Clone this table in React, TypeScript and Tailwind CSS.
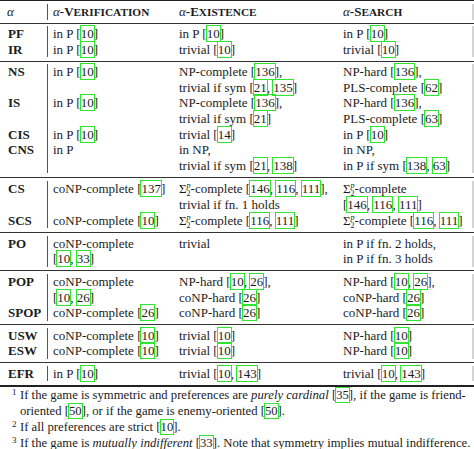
import { Fragment, type ReactNode } from "react";

const Cite = ({ n }: { n: number[] }) => (
  <>
    [
    {n.map((x, i) => (
      <Fragment key={i}>
        {i > 0 && ", "}
        <span className="outline outline-1 outline-[#2ee62e]">{x}</span>
      </Fragment>
    ))}
    ]
  </>
);

const Sigma = () => (
  <>
    Σ<span className="relative top-[3px] text-[8px]">2</span>
    <span className="relative -top-[5px] -ml-[4px] text-[8px] italic">p</span>
  </>
);

// header: α in math italic, then bold small caps
const Head = ({ first, rest }: { first: string; rest: string }) => (
  <span>
    <span className="italic font-normal">α</span>
    <span className="font-bold">
      -{first}
      <span className="text-[11.3px] uppercase">{rest}</span>
    </span>
  </span>
);

const Lines = ({ lines, bold }: { lines: ReactNode[]; bold?: boolean }) => (
  <div className={bold ? "font-bold pl-[8px]" : ""}>
    {lines.map((l, i) => (
      <div key={i} className="h-[15.6px] leading-[15.6px] whitespace-nowrap">
        {l}
      </div>
    ))}
  </div>
);

type Group = {
  labels: string[];
  ver: ReactNode[];
  ex: ReactNode[];
  se: ReactNode[];
  extra?: boolean;
};

const groups: Group[] = [
  {
    labels: ["PF", "IR"],
    ver: [<>in P <Cite n={[10]} /></>, <>in P <Cite n={[10]} /></>],
    ex: [<>in P <Cite n={[10]} /></>, <>trivial <Cite n={[10]} /></>],
    se: [<>in P <Cite n={[10]} /></>, <>trivial <Cite n={[10]} /></>],
  },
  {
    labels: ["NS", "", "IS", "", "CIS", "CNS", ""],
    ver: [
      <>in P <Cite n={[10]} /></>,
      "",
      <>in P <Cite n={[10]} /></>,
      "",
      <>in P <Cite n={[10]} /></>,
      "in P",
      "",
    ],
    ex: [
      <>NP-complete <Cite n={[136]} />,</>,
      <>trivial if sym <Cite n={[21, 135]} /></>,
      <>NP-complete <Cite n={[136]} />,</>,
      <>trivial if sym <Cite n={[21]} /></>,
      <>trivial <Cite n={[14]} /></>,
      "in NP,",
      <>trivial if sym <Cite n={[21, 138]} /></>,
    ],
    se: [
      <>NP-hard <Cite n={[136]} />,</>,
      <>PLS-complete <Cite n={[62]} /></>,
      <>NP-hard <Cite n={[136]} />,</>,
      <>PLS-complete <Cite n={[63]} /></>,
      <>in P <Cite n={[10]} /></>,
      "in NP,",
      <>in P if sym <Cite n={[138, 63]} /></>,
    ],
  },
  {
    labels: ["CS", "", "SCS"],
    extra: true,
    ver: [<>coNP-complete <Cite n={[137]} /></>, "", <>coNP-complete <Cite n={[10]} /></>],
    ex: [
      <><Sigma />-complete <Cite n={[146, 116, 111]} />,</>,
      "trivial if fn. 1 holds",
      <><Sigma />-complete <Cite n={[116, 111]} /></>,
    ],
    se: [
      <><Sigma />-complete</>,
      <Cite n={[146, 116, 111]} />,
      <><Sigma />-complete <Cite n={[116, 111]} /></>,
    ],
  },
  {
    labels: ["PO", ""],
    ver: ["coNP-complete", <Cite n={[10, 33]} />],
    ex: ["trivial", ""],
    se: ["in P if fn. 2 holds,", "in P if fn. 3 holds"],
  },
  {
    labels: ["POP", "", "SPOP"],
    ver: ["coNP-complete", <Cite n={[10, 26]} />, <>coNP-complete <Cite n={[26]} /></>],
    ex: [
      <>NP-hard <Cite n={[10, 26]} />,</>,
      <>coNP-hard <Cite n={[26]} /></>,
      <>coNP-hard <Cite n={[26]} /></>,
    ],
    se: [
      <>NP-hard <Cite n={[10, 26]} />,</>,
      <>coNP-hard <Cite n={[26]} /></>,
      <>coNP-hard <Cite n={[26]} /></>,
    ],
  },
  {
    labels: ["USW", "ESW"],
    ver: [<>coNP-complete <Cite n={[10]} /></>, <>coNP-complete <Cite n={[10]} /></>],
    ex: [<>trivial <Cite n={[10]} /></>, <>trivial <Cite n={[10]} /></>],
    se: [<>NP-hard <Cite n={[10]} /></>, <>NP-hard <Cite n={[10]} /></>],
  },
  {
    labels: ["EFR"],
    ver: [<>in P <Cite n={[10]} /></>],
    ex: [<>trivial <Cite n={[10, 143]} /></>],
    se: [<>trivial <Cite n={[10, 143]} /></>],
  },
];

const Note = ({ num, children }: { num: string; children: ReactNode }) => (
  <div className="flex">
    <span className="w-[20px] pl-[12px] text-[9px] leading-[10px] shrink-0">{num}</span>
    <div>{children}</div>
  </div>
);

export default function App() {
  return (
    <div className="w-[474px] h-[449px] overflow-hidden bg-white text-[13px] text-[#1c1c1c] font-['Liberation_Serif',serif]">
      <div className="border-t-[1.5px] border-b-2 border-[#222]">
        <div className="grid grid-cols-[47px_132px_164px_129px_2px] border-b border-[#333] pt-[3px] pb-[3px]">
          <div className="pl-[7px] italic h-[15.6px] leading-[15.6px]">α</div>
          <div className="border-l border-[#555] pl-[5px] h-[15.6px] leading-[15.6px] whitespace-nowrap">
            <Head first="V" rest="erification" />
          </div>
          <div className="h-[15.6px] leading-[15.6px] whitespace-nowrap">
            <Head first="E" rest="xistence" />
          </div>
          <div className="h-[15.6px] leading-[15.6px] whitespace-nowrap">
            <Head first="S" rest="earch" />
          </div>
          <div className="bg-[#d4d4d4]" />
        </div>
        {groups.map((g, i) => (
          <div
            key={i}
            className={
              "grid grid-cols-[47px_132px_164px_129px_2px] border-[#333] " +
              (i < groups.length - 1 ? "border-b " : "") +
              (g.extra ? "pt-[3.5px] pb-[4px]" : "pt-[2.5px] pb-[3.5px]")
            }
          >
            <Lines lines={g.labels} bold />
            <div className="border-l border-[#555] pl-[5px]">
              <Lines lines={g.ver} />
            </div>
            <Lines lines={g.ex} />
            <Lines lines={g.se} />
            <div className="bg-[#d4d4d4]" />
          </div>
        ))}
      </div>
      <div className="text-[12.7px] leading-[16px] whitespace-nowrap">
        <Note num="1">
          <div>
            If the game is symmetric and preferences are <i>purely cardinal</i> <Cite n={[35]} />, if the game is friend-
          </div>
          <div>
            oriented <Cite n={[50]} />, or if the game is enemy-oriented <Cite n={[50]} />.
          </div>
        </Note>
        <Note num="2">
          <div>
            If all preferences are strict <Cite n={[10]} />.
          </div>
        </Note>
        <Note num="3">
          <div>
            If the game is <i>mutually indifferent</i> <Cite n={[33]} />. Note that symmetry implies mutual indifference.
          </div>
        </Note>
      </div>
    </div>
  );
}
